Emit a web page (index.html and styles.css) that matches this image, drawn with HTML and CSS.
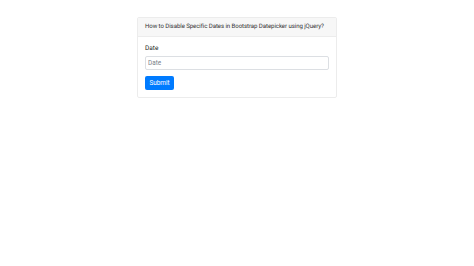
FILE: index.html
```html
<!DOCTYPE html>
<html>
<head>
<meta charset="utf-8">
<link rel="stylesheet" href="styles.css">
</head>
<body>
<div class="page">
  <div class="card">
    <div class="card-header">How to Disable Specific Dates in Bootstrap Datepicker using jQuery?</div>
    <div class="card-body">
      <label class="label">Date</label>
      <input class="input" type="text" placeholder="Date">
      <button class="btn">Submit</button>
    </div>
  </div>
</div>
</body>
</html>
```
FILE: styles.css
```css
* { box-sizing: border-box; }
html, body { margin: 0; padding: 0; background: #fff; }
body { font-family: Roboto, "Liberation Sans", sans-serif; color: #212529; font-size: 7px; line-height: 1.5; text-rendering: geometricPrecision; }
.page { display: flex; justify-content: center; padding-top: 17px; }
.card { width: 200px; border: 1px solid #ececec; border-radius: 2px; background: #fff; }
.card-header { background: #f7f7f7; border-bottom: 1px solid #ececec; padding: 0 7px; height: 19px; font-size: 6.1px; letter-spacing: -0.08px; line-height: 18px; color: #333; white-space: nowrap; }
.card-body { padding: 6px 7px 7px 7px; display: flex; flex-direction: column; align-items: flex-start; }
.label { font-size: 6.5px; line-height: 10px; margin-left: 0; margin-bottom: 3px; color: #222; }
.input { width: 100%; height: 14px; border: 1px solid #dcdfe3; border-radius: 2px; padding: 0 2px; font-family: inherit; font-size: 6.4px; color: #495057; margin-bottom: 6px; outline: none; }
.input::placeholder { color: #7a8088; }
.btn { background: #007bff; border: none; border-radius: 2px; color: #fff; font-family: inherit; font-size: 6.4px; height: 14px; padding: 0; line-height: 14px; width: 29px; text-align: center; }
```
